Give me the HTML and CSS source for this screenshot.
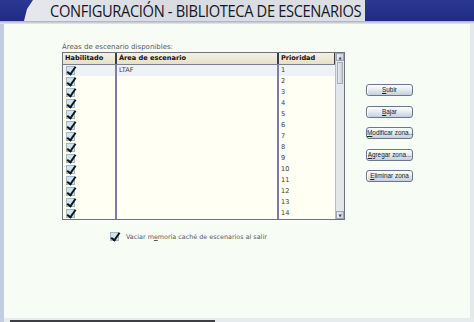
FILE: index.html
```html
<!DOCTYPE html>
<html lang="es">
<head>
<meta charset="utf-8">
<link rel="stylesheet" href="styles.css">
</head>
<body>
<div class="window">
  <header class="titlebar">
    <div class="tab"><h1 class="title">CONFIGURACIÓN - BIBLIOTECA DE ESCENARIOS</h1></div>
  </header>
  <div class="shade"></div>
  <main class="content">
    <section class="left">
      <div class="caption">Áreas de escenario disponibles:</div>
      <div class="listbox">
        <div class="grid">
          <div class="head">
            <div class="hc c1">Habilitado</div>
            <div class="hc c2">Área de escenario</div>
            <div class="hc c3">Prioridad</div>
          </div>
          <div class="rows">
            <div class="row sel"><div class="c1"><span class="chk"></span></div><div class="c2">LTAF</div><div class="c3">1</div></div>
            <div class="row"><div class="c1"><span class="chk"></span></div><div class="c2"></div><div class="c3">2</div></div>
            <div class="row"><div class="c1"><span class="chk"></span></div><div class="c2"></div><div class="c3">3</div></div>
            <div class="row"><div class="c1"><span class="chk"></span></div><div class="c2"></div><div class="c3">4</div></div>
            <div class="row"><div class="c1"><span class="chk"></span></div><div class="c2"></div><div class="c3">5</div></div>
            <div class="row"><div class="c1"><span class="chk"></span></div><div class="c2"></div><div class="c3">6</div></div>
            <div class="row"><div class="c1"><span class="chk"></span></div><div class="c2"></div><div class="c3">7</div></div>
            <div class="row"><div class="c1"><span class="chk"></span></div><div class="c2"></div><div class="c3">8</div></div>
            <div class="row"><div class="c1"><span class="chk"></span></div><div class="c2"></div><div class="c3">9</div></div>
            <div class="row"><div class="c1"><span class="chk"></span></div><div class="c2"></div><div class="c3">10</div></div>
            <div class="row"><div class="c1"><span class="chk"></span></div><div class="c2"></div><div class="c3">11</div></div>
            <div class="row"><div class="c1"><span class="chk"></span></div><div class="c2"></div><div class="c3">12</div></div>
            <div class="row"><div class="c1"><span class="chk"></span></div><div class="c2"></div><div class="c3">13</div></div>
            <div class="row"><div class="c1"><span class="chk"></span></div><div class="c2"></div><div class="c3">14</div></div>
          </div>
        </div>
        <div class="scrollbar">
          <div class="arrow up">▲</div>
          <div class="track"><div class="thumb"></div></div>
          <div class="arrow down">▼</div>
        </div>
      </div>
      <label class="option"><span class="chk"></span><span>Vaciar m<u>e</u>moria caché de escenarios al salir</span></label>
    </section>
    <nav class="buttons">
      <button class="btn"><u>S</u>ubir</button>
      <button class="btn"><u>B</u>ajar</button>
      <button class="btn"><u>M</u>odificar zona...</button>
      <button class="btn"><u>A</u>gregar zona...</button>
      <button class="btn"><u>E</u>liminar zona</button>
    </nav>
  </main>
  <footer class="footer"><div class="task"></div></footer>
</div>
</body>
</html>
```
FILE: styles.css
```css
* { box-sizing: border-box; }
html, body { margin: 0; padding: 0; }
body {
  width: 474px;
  height: 322px;
  overflow: hidden;
  background: #f7fcf5;
  font-family: "DejaVu Sans", Verdana, sans-serif;
}
.window {
  display: flex;
  flex-direction: column;
  height: 322px;
}
.titlebar {
  height: 21px;
  background: linear-gradient(#2b3894, #1f2b82);
  display: flex;
}
.tab {
  margin-left: 24px;
  width: 341px;
  height: 21px;
  background: linear-gradient(90deg, #e6e8ec 0%, #d8dbe1 40%, #dcdfe4 100%);
  clip-path: polygon(9px 0, 100% 0, 100% 100%, 0 100%, 3px 9px);
  display: flex;
  align-items: center;
}
.title {
  margin: 0 0 0 26px;
  font-family: "Open Sans", sans-serif;
  font-weight: 400;
  font-size: 16.5px;
  letter-spacing: -0.4px;
  color: #16161e;
  white-space: nowrap;
  line-height: 21px;
  transform: scaleX(0.89);
  transform-origin: left center;
}
.shade {
  height: 3px;
  background: linear-gradient(#a9adbb, #e7eaef);
}
.content {
  flex: 1;
  display: flex;
  align-items: flex-start;
  border-left: 4px solid #c3cde2;
  border-right: 4px solid #e4e9ee;
}
.left {
  margin-left: 58px;
  margin-top: 18px;
  display: flex;
  flex-direction: column;
}
.caption {
  font-size: 7px;
  color: #555a66;
  height: 10px;
  line-height: 10px;
}
.listbox {
  display: flex;
  width: 283px;
  height: 168px;
  border: 1px solid #6f7280;
  background: #fffff4;
}
.grid {
  width: 272px;
  display: flex;
  flex-direction: column;
}
.head {
  display: flex;
  height: 12px;
  background: linear-gradient(#f4f1e4, #e6e0c8);
  border-bottom: 1px solid #7b7e8c;
}
.hc {
  font-weight: bold;
  font-size: 6.6px;
  color: #111;
  line-height: 11px;
  padding-left: 2px;
  border-right: 2px solid #3a3c48;
}
.hc.c3 { border-right: 1px solid #3a3c48; }
.c1 { width: 54px; flex: none; }
.c2 { width: 162px; flex: none; }
.c3 { flex: 1; }
.rows { flex: 1; display: flex; flex-direction: column; }
.row {
  display: flex;
  height: 11px;
  font-size: 6.6px;
  color: #3a3a44;
  line-height: 11px;
}
.row.sel { background: #eef1f8; }
.row .c1 { padding-left: 3px; display: flex; align-items: center; border-right: 2px solid #7c7ca8; }
.row .c2 { padding-left: 2px; border-right: 2px solid #7c7ca8; }
.row .c3 { padding-left: 2px; }
.chk {
  display: inline-block;
  flex: none;
  width: 9px;
  height: 9px;
  background: #cfe4ef;
  border: 1px solid #9fb8c8;
  position: relative;
}
.chk::after {
  content: "";
  position: absolute;
  left: 2px;
  top: -2px;
  width: 3px;
  height: 8px;
  border: solid #10161c;
  border-width: 0 2px 2px 0;
  transform: rotate(35deg);
}
.scrollbar {
  width: 9px;
  display: flex;
  flex-direction: column;
  background: #e3e6ea;
  border-left: 1px solid #b8bcc4;
}
.arrow {
  height: 8px;
  font-size: 4px;
  line-height: 8px;
  text-align: center;
  color: #445;
  background: linear-gradient(90deg, #eef1f5, #c9d0da);
  border: 1px solid #9aa4b4;
}
.track { flex: 1; padding-top: 1px; }
.thumb {
  height: 22px;
  margin: 0 1px;
  background: linear-gradient(90deg, #e8ecf2, #c6ccd6);
  border: 1px solid #a3acba;
}
.option {
  margin-top: 12px;
  margin-left: 48px;
  display: flex;
  align-items: center;
  gap: 7px;
  font-size: 6.4px;
  color: #555a66;
}
.buttons {
  margin-left: 21px;
  margin-top: 60px;
  display: flex;
  flex-direction: column;
  gap: 9.5px;
}
.btn {
  width: 47px;
  height: 12px;
  padding: 0;
  font-family: "Liberation Sans", Arial, sans-serif;
  font-size: 6.4px;
  color: #222;
  border: 1px solid #687690;
  border-radius: 3px;
  background: linear-gradient(#ffffff 0%, #e4e9f1 50%, #c7cfdc 100%);
  box-shadow: inset 1px 0 0 #fff;
  line-height: 10px;
  white-space: nowrap;
}
.footer {
  height: 4px;
  background: #e6ecee;
  border-left: 4px solid #c3cde2;
  display: flex;
}
.task {
  margin-left: 6px;
  width: 205px;
  height: 4px;
  background: #3d3f44;
  margin-top: 2px;
}
```
